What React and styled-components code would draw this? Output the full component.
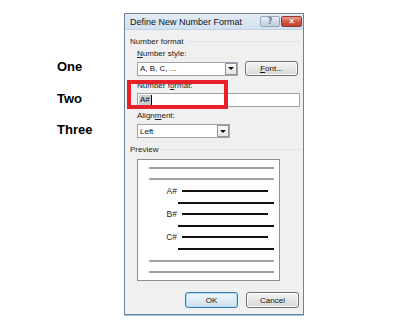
import React from "react";
import styled, { createGlobalStyle } from "styled-components";

const Global = createGlobalStyle`
  html, body { margin: 0; padding: 0; background: #fff; }
  body { width: 400px; height: 331px; overflow: hidden; font-family: "Liberation Sans", Arial, sans-serif; }
`;

const Page = styled.div`
  display: flex;
  align-items: flex-start;
  width: 400px;
  height: 331px;
`;

const Labels = styled.div`
  display: flex;
  flex-direction: column;
  width: 40px;
  margin: 51px 0 0 57px;
`;

const SideLabel = styled.div`
  height: 31.5px;
  display: flex;
  align-items: center;
  font: bold 13px "Liberation Sans", Arial, sans-serif;
  color: #000;
`;

const Dialog = styled.div`
  position: relative;
  box-sizing: border-box;
  width: 180px;
  height: 302px;
  margin: 13px 0 0 27px;
  border: 1px solid #6f8197;
  box-shadow: 0 1px 0 #9fc3e3;
  display: flex;
  flex-direction: column;
  background: #f0f0f0;
`;

const TitleBar = styled.div`
  height: 15px;
  flex: none;
  display: flex;
  align-items: center;
  padding-left: 5px;
  padding-right: 1px;
  background: linear-gradient(#e3ecf6, #d3e1f0);
  border-bottom: 1px solid #c3d2e3;
`;

const Title = styled.div`
  flex: 1;
  font-size: 9px;
  color: #111;
  white-space: nowrap;
`;

const CaptionBtn = styled.div`
  width: ${(p) => p.$w}px;
  height: 11px;
  box-sizing: border-box;
  border: 1px solid ${(p) => (p.$close ? "#8e3a30" : "#97a7ba")};
  border-radius: 2px;
  margin-left: 1px;
  background: ${(p) =>
    p.$close
      ? "linear-gradient(#e8a08f, #d25a45 50%, #c2402c)"
      : "linear-gradient(#e9eff6, #d2dce8 50%, #c3cfdd)"};
  display: flex;
  align-items: center;
  justify-content: center;
  color: ${(p) => (p.$close ? "#fff" : "#6a7a8e")};
  font: bold 8px "DejaVu Sans", sans-serif;
  line-height: 1;
`;

const Body = styled.div`
  flex: 1;
  display: flex;
  flex-direction: column;
  padding: 6px 0 0 5px;
`;

const GroupHeader = styled.div`
  display: flex;
  align-items: center;
  height: 10px;
  font-size: 8px;
  color: #1a1a1a;
  margin-top: ${(p) => p.$mt || 0}px;
  &::after {
    content: "";
    flex: 1;
    height: 1px;
    margin: 0 2px 0 4px;
    background: #dde3ea;
  }
`;

const Field = styled.div`
  margin-left: 7px;
  display: flex;
  flex-direction: column;
`;

const Label = styled.div`
  height: 10px;
  line-height: 10px;
  font-size: 8px;
  color: #1a1a1a;
  margin-top: ${(p) => p.$mt || 0}px;
`;

const Row = styled.div`
  display: flex;
  align-items: center;
  margin-top: ${(p) => p.$mt || 0}px;
`;

const Combo = styled.div`
  box-sizing: border-box;
  width: ${(p) => p.$w}px;
  height: 14px;
  border: 1px solid #9ea3ab;
  background: #fff;
  display: flex;
  align-items: center;
  padding-left: 2px;
  font-size: 8px;
  color: #111;
`;

const ComboText = styled.div`
  flex: 1;
`;

const Arrow = styled.div`
  width: 12px;
  height: 12px;
  box-sizing: border-box;
  border: 1px solid #8f959c;
  background: linear-gradient(#fafafa, #e4e4e4);
  display: flex;
  align-items: center;
  justify-content: center;
  &::before {
    content: "";
    border-left: 3px solid transparent;
    border-right: 3px solid transparent;
    border-top: 3px solid #111;
  }
`;

const Button = styled.div`
  box-sizing: border-box;
  width: 53px;
  height: ${(p) => p.$h || 16}px;
  margin-left: ${(p) => p.$ml || 0}px;
  border: 1px solid ${(p) => (p.$default ? "#3d7bad" : "#707070")};
  border-radius: 3px;
  background: ${(p) =>
    p.$default
      ? "linear-gradient(#eef6fc, #e0ecf6 50%, #cfe0ee)"
      : "linear-gradient(#f3f3f3, #e6e6e6 50%, #d5d5d5)"};
  box-shadow: inset 0 0 0 1px ${(p) => (p.$default ? "#a8dcf7" : "#fbfbfb")};
  display: flex;
  align-items: center;
  justify-content: center;
  font-size: 8px;
  color: #111;
`;

const Input = styled.div`
  box-sizing: border-box;
  width: 163px;
  height: 14px;
  margin-top: 2px;
  border: 1px solid #9ea3ab;
  background: #fff;
  display: flex;
  align-items: center;
  padding-left: 1px;
  font-size: 8px;
  color: #111;
`;

const Selected = styled.span`
  background: #c9ced6;
  padding: 0 1px;
  line-height: 10px;
`;

const Caret = styled.span`
  width: 1px;
  height: 10px;
  background: #000;
`;

const Preview = styled.div`
  box-sizing: border-box;
  width: 143px;
  height: 122px;
  margin-top: 5px;
  border: 1px solid #8c9096;
  background: #fff;
  padding-top: 2px;
  display: flex;
  flex-direction: column;
`;

const PLine = styled.div`
  height: 11.6px;
  display: flex;
  align-items: center;
  padding: 0 ${(p) => p.$r}px 0 ${(p) => p.$l}px;
  &::after {
    content: "";
    flex: 1;
    height: 2px;
    background: ${(p) => (p.$gray ? "#a3a3a3" : "#111")};
  }
`;

const PLabel = styled.div`
  width: 39px;
  text-align: right;
  margin-right: 5px;
  font-size: 8.5px;
  color: #1e1e1e;
`;

const Buttons = styled.div`
  display: flex;
  justify-content: flex-end;
  margin: 11px 4px 0 0;
`;

const Highlight = styled.div`
  position: absolute;
  left: 2px;
  top: 66px;
  width: 101px;
  height: 29px;
  box-sizing: border-box;
  border: 4px solid #e8202a;
  pointer-events: none;
`;

export default function App() {
  return (
    <>
      <Global />
      <Page>
        <Labels>
          <SideLabel>One</SideLabel>
          <SideLabel>Two</SideLabel>
          <SideLabel>Three</SideLabel>
        </Labels>
        <Dialog>
          <TitleBar>
            <Title>Define New Number Format</Title>
            <CaptionBtn $w={20}>?</CaptionBtn>
            <CaptionBtn $w={21} $close>✕</CaptionBtn>
          </TitleBar>
          <Body>
            <GroupHeader>Number format</GroupHeader>
            <Field>
              <Label $mt={3}>
                <u>N</u>umber style:
              </Label>
              <Row $mt={2}>
                <Combo $w={101}>
                  <ComboText>A, B, C, ...</ComboText>
                  <Arrow />
                </Combo>
                <Button $ml={7} $h={15}>
                  <u>F</u>ont...
                </Button>
              </Row>
              <Label $mt={5}>
                Number f<u>o</u>rmat:
              </Label>
              <Input>
                <Selected>A#</Selected>
                <Caret />
              </Input>
              <Label $mt={4}>
                Align<u>m</u>ent:
              </Label>
              <Row $mt={3}>
                <Combo $w={93}>
                  <ComboText>Left</ComboText>
                  <Arrow />
                </Combo>
              </Row>
            </Field>
            <GroupHeader $mt={6}>Preview</GroupHeader>
            <Field>
              <Preview>
                <PLine $gray $l={11} $r={5} />
                <PLine $gray $l={11} $r={5} />
                <PLine $l={0} $r={11}>
                  <PLabel>A#</PLabel>
                </PLine>
                <PLine $l={40} $r={5} />
                <PLine $l={0} $r={11}>
                  <PLabel>B#</PLabel>
                </PLine>
                <PLine $l={40} $r={5} />
                <PLine $l={0} $r={11}>
                  <PLabel>C#</PLabel>
                </PLine>
                <PLine $l={40} $r={5} />
                <PLine $gray $l={11} $r={5} />
                <PLine $gray $l={11} $r={5} />
              </Preview>
            </Field>
            <Buttons>
              <Button $default>OK</Button>
              <Button $ml={8}>Cancel</Button>
            </Buttons>
          </Body>
          <Highlight />
        </Dialog>
      </Page>
    </>
  );
}
